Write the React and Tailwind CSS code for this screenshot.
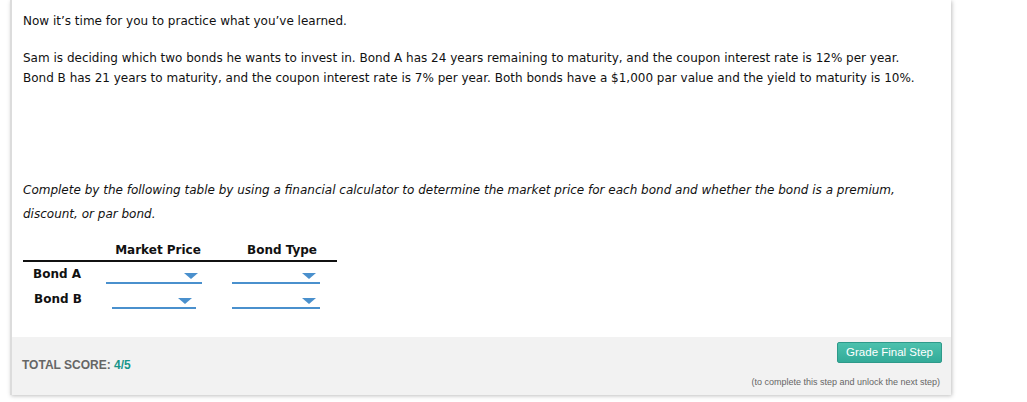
import React from "react";

const Dropdown = ({ width, ml }) => (
  <div className={`relative h-[16px] border-b-2 border-[#4a90cd] ${width} ${ml}`}>
    <span className="absolute right-[4px] top-[5px] w-0 h-0 border-l-[7px] border-r-[7px] border-t-[6px] border-l-transparent border-r-transparent border-t-[#4a90cd]" />
  </div>
);

const App = () => {
  return (
    <div className="w-[1027px] h-[402px] bg-white overflow-hidden">
      <div className="ml-[10px] w-[941px] h-[395px] flex flex-col bg-white border-l-2 border-[#dcdcdc] shadow-[1px_1px_4px_rgba(0,0,0,0.25)]">
        <div
          className="flex-1 pl-[11px] pt-[11px] text-[12px] text-[#111] leading-[20px] whitespace-nowrap"
          style={{ fontFamily: "Verdana, 'DejaVu Sans', sans-serif" }}
        >
          <p>Now it’s time for you to practice what you’ve learned.</p>
          <p className="mt-[17px]">
            Sam is deciding which two bonds he wants to invest in. Bond A has 24 years remaining to maturity, and the coupon interest rate is 12% per year.
            <br />
            Bond B has 21 years to maturity, and the coupon interest rate is 7% per year. Both bonds have a $1,000 par value and the yield to maturity is 10%.
          </p>
          <p className="mt-[90px] italic leading-[24px]">
            Complete by the following table by using a financial calculator to determine the market price for each bond and whether the bond is a premium,
            <br />
            discount, or par bond.
          </p>
          <div className="mt-[14px] w-[314px]">
            <div className="flex font-bold border-b-2 border-[#111]">
              <span className="w-[85px]" />
              <span className="w-[100px] text-center">Market Price</span>
              <span className="w-[32px]" />
              <span className="w-[84px] text-center">Bond Type</span>
            </div>
            <div className="flex items-end h-[22px]">
              <span className="w-[83px] font-bold pl-[10px] self-center mt-[1px]">Bond A</span>
              <Dropdown width="w-[96px]" ml="" />
              <Dropdown width="w-[88px]" ml="ml-[30px]" />
            </div>
            <div className="flex items-end h-[25px]">
              <span className="w-[89px] font-bold pl-[11px] self-center mt-[5px]">Bond B</span>
              <Dropdown width="w-[84px]" ml="" />
              <Dropdown width="w-[88px]" ml="ml-[36px]" />
            </div>
          </div>
        </div>
        <div
          className="h-[58px] bg-[#f2f2f2] flex items-center justify-between pl-[10px] pr-[9px]"
          style={{ fontFamily: "'Liberation Sans', Arial, sans-serif" }}
        >
          <div className="text-[12px] font-bold text-[#666] mt-[-2px]">
            TOTAL SCORE: <span className="text-[#18958a]">4/5</span>
          </div>
          <div className="flex flex-col items-end gap-[13px] mt-[-1px]">
            <button className="h-[21px] px-[8px] rounded-[2px] border border-[#2e9a8a] bg-gradient-to-b from-[#4cc1ad] to-[#33ab99] text-white text-[11.5px] font-medium">
              Grade Final Step
            </button>
            <span className="text-[9px] text-[#666] mr-[2px]">
              (to complete this step and unlock the next step)
            </span>
          </div>
        </div>
      </div>
    </div>
  );
};

export default App;
